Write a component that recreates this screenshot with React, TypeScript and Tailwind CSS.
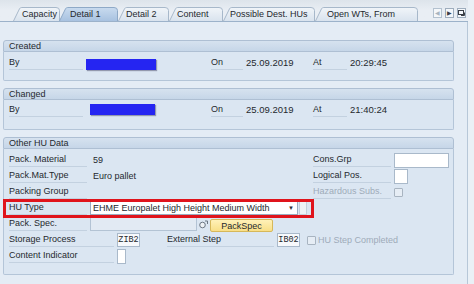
import React from 'react';

interface TabDef {
  label: string;
  w: number;
  cls: string;
  active?: boolean;
}

const tabs: TabDef[] = [
  { label: 'Capacity', w: 47, cls: 'w-[47px] pl-[9px]' },
  { label: 'Detail 1', w: 59, cls: 'w-[59px] pl-[11px] -ml-[1px] z-10', active: true },
  { label: 'Detail 2', w: 51, cls: 'w-[51px] pl-[8px]' },
  { label: 'Content', w: 54, cls: 'w-[54px] pl-[8px]' },
  { label: 'Possible Dest. HUs', w: 92, cls: 'w-[92px] pl-[7px]' },
  { label: 'Open WTs, From', w: 103, cls: 'w-[103px] pl-[12px]' },
];

function Tab({ t }: { t: TabDef }) {
  const W = t.w;
  const d = `M0.5 14 L6.5 1.8 Q7.2 0.5 8.8 0.5 L${W - 4} 0.5 Q${W - 0.5} 0.5 ${W - 0.5} 3.5 L${W - 0.5} 14`;
  const gid = `g-${t.label.replace(/[^a-z0-9]/gi, '')}`;
  return (
    <div className={`relative h-[14px] shrink-0 flex items-center ${t.cls}`}>
      <svg className="absolute inset-0" width={W} height={14} viewBox={`0 0 ${W} 14`}>
        <defs>
          <linearGradient id={gid} x1="0" y1="0" x2="0" y2="1">
            <stop offset="0" stopColor={t.active ? '#c9dbef' : '#f1f5f9'} />
            <stop offset="1" stopColor={t.active ? '#a8c2e0' : '#d9e3ee'} />
          </linearGradient>
        </defs>
        <path d={d} fill={`url(#${gid})`} stroke={t.active ? '#8ea9c7' : '#a7b8ca'} strokeWidth="1" />
      </svg>
      <span className="relative text-[#25292e] whitespace-nowrap">{t.label}</span>
    </div>
  );
}

function GroupBox({ title, children, bodyCls }: { title: string; children: React.ReactNode; bodyCls: string }) {
  return (
    <div className="w-[451px]">
      <div className="h-[12px] flex items-center pl-[5px] border border-[#aebfd3] rounded-t-[3px] bg-gradient-to-b from-[#d6e2ef] to-[#c6d6e8] text-[#25292e]">
        {title}
      </div>
      <div className={`border-x border-b border-[#b4c5d8] rounded-b-[2px] bg-[#dbe6f2] pl-[5px] ${bodyCls}`}>
        {children}
      </div>
    </div>
  );
}

function Label({ text, cls, grey }: { text: string; cls: string; grey?: boolean }) {
  return (
    <div className={`shrink-0 pr-[3px] ${cls}`}>
      <div className={`border-b border-[#c3d1e0] leading-[13px] whitespace-nowrap ${grey ? 'text-[#9eabb9]' : 'text-[#25292e]'}`}>
        {text}
      </div>
    </div>
  );
}

function ChangeRow({ rectCls, date, time }: { rectCls: string; date: string; time: string }) {
  return (
    <div className="flex items-center h-[14px]">
      <Label text="By" cls="w-[77px]" />
      <div className="w-[125px] shrink-0 flex">
        <div className={`h-[11px] bg-[#2525f2] shadow-[1px_1px_1px_rgba(60,60,90,0.45)] ${rectCls}`} />
      </div>
      <Label text="On" cls="w-[35px]" />
      <div className="w-[67px] shrink-0 text-[9.5px]">{date}</div>
      <Label text="At" cls="w-[37px]" />
      <div className="text-[9.5px]">{time}</div>
    </div>
  );
}

export default function App() {
  return (
    <div className="w-[474px] h-[284px] overflow-hidden bg-[#eaf0f6] text-[9px] leading-[12px] text-[#25292e] font-['Liberation_Sans',Arial,sans-serif]">
      {/* tab strip */}
      <div className="flex items-end h-[22px] w-[468px] pl-[13px] border-b border-[#9cb2ca] bg-gradient-to-b from-[#dde4eb] via-[#e9eef4] to-[#e9eef4]">
        {tabs.map(t => (
          <Tab key={t.label} t={t} />
        ))}
        <div className="ml-auto self-start mt-[8px] mr-[2px] flex gap-[3px]">
          <div className="w-[9px] h-[10px] border border-[#b3c1cf] bg-[#f4f7fa] flex items-center justify-center text-[6px] text-[#a9b4c0]">◀</div>
          <div className="w-[9px] h-[10px] border border-[#9eadbd] bg-[#f4f7fa] flex items-center justify-center text-[6px] text-[#3a3f46]">▶</div>
          <div className="w-[9px] h-[10px] border border-[#9eadbd] bg-[#f4f7fa] flex items-center justify-center">
            <svg width="7" height="7" viewBox="0 0 7 7">
              <rect x="0.5" y="0.5" width="5" height="4" fill="none" stroke="#3a3f46" strokeWidth="1" />
              <path d="M3 5.5 H6.5 V2.5" fill="none" stroke="#3a3f46" strokeWidth="1" />
            </svg>
          </div>
        </div>
      </div>

      {/* content frame */}
      <div className="w-[468px] h-[262px] border-r border-[#b7c7d8] bg-[#e4ecf5] pt-[18px] pl-[3px] flex flex-col gap-[7px]">
        <GroupBox title="Created" bodyCls="h-[29px] pt-[4px]">
          <ChangeRow rectCls="w-[70px] mt-[2px]" date="25.09.2019" time="20:29:45" />
        </GroupBox>

        <GroupBox title="Changed" bodyCls="h-[30px] pt-[3px]">
          <ChangeRow rectCls="w-[65px] ml-[4px] -mt-[1px]" date="25.09.2019" time="21:40:24" />
        </GroupBox>

        <GroupBox title="Other HU Data" bodyCls="h-[126px] pt-[3px]">
          <div className="flex items-center h-[16px]">
            <Label text="Pack. Material" cls="w-[81px]" />
            <div className="w-[223px] shrink-0 pl-[3px]">59</div>
            <Label text="Cons.Grp" cls="w-[81px]" />
            <div className="w-[55px] h-[15px] bg-white border border-[#a9b9ca]" />
          </div>
          <div className="flex items-center h-[16px]">
            <Label text="Pack.Mat.Type" cls="w-[81px]" />
            <div className="w-[223px] shrink-0 pl-[3px]">Euro pallet</div>
            <Label text="Logical Pos." cls="w-[81px]" />
            <div className="w-[14px] h-[15px] bg-white border border-[#a9b9ca]" />
          </div>
          <div className="flex items-center h-[16px]">
            <Label text="Packing Group" cls="w-[81px]" />
            <div className="w-[223px] shrink-0" />
            <Label text="Hazardous Subs." cls="w-[81px]" grey />
            <div className="w-[9px] h-[9px] border border-[#a8b4c1] bg-[#e6edf5] rounded-[1px]" />
          </div>
          <div className="relative flex items-center h-[16px]">
            <Label text="HU Type" cls="w-[81px]" />
            <div className="w-[208px] h-[14px] bg-white border border-[#9aacbf] flex items-center pl-[2px] pr-[3px]">
              <span className="whitespace-nowrap">EHME Europalet High Height Medium Width</span>
              <span className="ml-auto text-[6px] text-[#2d3136]">▼</span>
            </div>
            <div className="w-[8px] h-[14px] ml-[1px] bg-[#eef2f6] border border-[#c3cfdb]" />
            <div className="absolute left-[-6px] top-[-1px] w-[311px] h-[19px] border-[3px] border-[#e0141c]" />
          </div>
          <div className="flex items-center h-[16px]">
            <Label text="Pack. Spec." cls="w-[81px]" />
            <div className="w-[107px] h-[14px] bg-[#e2eaf3] border border-[#b3c3d4]" />
            <div className="w-[13px] flex justify-center">
              <svg width="10" height="9" viewBox="0 0 10 9">
                <circle cx="3.5" cy="5" r="2.8" fill="#eef2f6" stroke="#6b7682" strokeWidth="1" />
                <path d="M6 1 H8.5 V4" fill="none" stroke="#6b7682" strokeWidth="1" />
              </svg>
            </div>
            <div className="w-[63px] h-[13px] mt-[3px] bg-gradient-to-b from-[#fff1b8] to-[#f8df87] border border-[#d6b85a] rounded-[2px] flex items-center justify-center text-[#25292e]">
              PackSpec
            </div>
          </div>
          <div className="flex items-center h-[16px]">
            <Label text="Storage Process" cls="w-[108px]" />
            <div className="w-[23px] h-[14px] bg-[#f7f9fc] border border-[#a9b9ca] flex items-center justify-center font-['Liberation_Mono',monospace] text-[8.5px]">
              ZIB2
            </div>
            <div className="w-[27px] shrink-0" />
            <Label text="External Step" cls="w-[110px]" />
            <div className="w-[23px] h-[14px] bg-[#f7f9fc] border border-[#a9b9ca] flex items-center justify-center font-['Liberation_Mono',monospace] text-[8.5px]">
              IB02
            </div>
            <div className="w-[9px] h-[9px] ml-[7px] border border-[#a8b4c1] bg-[#e6edf5] rounded-[1px]" />
            <span className="ml-[2px] text-[#9eabb9] whitespace-nowrap">HU Step Completed</span>
          </div>
          <div className="flex items-center h-[16px]">
            <Label text="Content Indicator" cls="w-[108px]" />
            <div className="w-[9px] h-[15px] bg-white border border-[#a9b9ca]" />
          </div>
        </GroupBox>
      </div>
    </div>
  );
}
